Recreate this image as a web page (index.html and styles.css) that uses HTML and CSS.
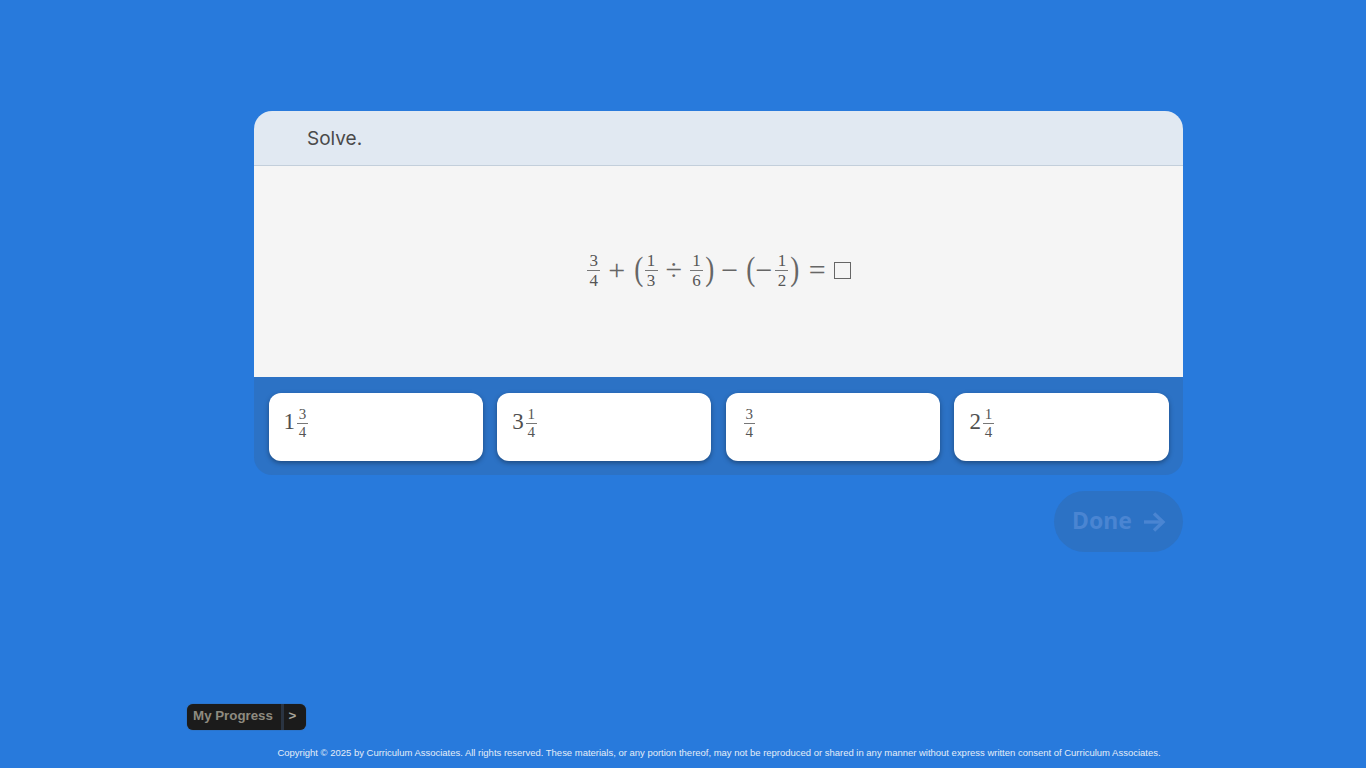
FILE: index.html
```html
<!DOCTYPE html>
<html lang="en">
<head>
  <meta charset="UTF-8">
  <title>Solve</title>
  <link rel="stylesheet" href="styles.css">
</head>
<body>
  <div id="page">
    <main id="lesson">
      <section class="question-card">
        <div class="question-header">Solve.</div>
        <div class="question-body">
          <div class="math">
            <span class="frac"><span class="num">3</span><span class="den">4</span></span>
            <span class="op">+</span>
            <span class="paren">(</span>
            <span class="frac"><span class="num">1</span><span class="den">3</span></span>
            <span class="op">÷</span>
            <span class="frac"><span class="num">1</span><span class="den">6</span></span>
            <span class="paren close">)</span>
            <span class="op minus">−</span>
            <span class="paren">(</span>
            <span class="op tight">−</span>
            <span class="frac"><span class="num">1</span><span class="den">2</span></span>
            <span class="paren close">)</span>
            <span class="op">=</span>
            <span class="blank"></span>
          </div>
        </div>
        <div class="answers">
          <button class="answer"><span class="whole">1</span><span class="frac small"><span class="num">3</span><span class="den">4</span></span></button>
          <button class="answer"><span class="whole">3</span><span class="frac small"><span class="num">1</span><span class="den">4</span></span></button>
          <button class="answer"><span class="frac small"><span class="num">3</span><span class="den">4</span></span></button>
          <button class="answer"><span class="whole">2</span><span class="frac small"><span class="num">1</span><span class="den">4</span></span></button>
        </div>
      </section>
      <div class="done-row">
        <button class="done-button" disabled>
          <span class="done-label">Done</span>
          <svg width="24" height="22" viewBox="0 0 24 22" fill="none" stroke="currentColor" stroke-width="3.4">
            <path d="M2 11H21"/>
            <path d="M12 2.5L21 11L12 19.5"/>
          </svg>
        </button>
      </div>
    </main>

    <footer id="footer">
      <div class="progress-tab">
        <span class="progress-label">My Progress</span>
        <span class="progress-arrow">&gt;</span>
      </div>
      <p class="copyright">Copyright © 2025 by Curriculum Associates. All rights reserved. These materials, or any portion thereof, may not be reproduced or shared in any manner without express written consent of Curriculum Associates.</p>
    </footer>
  </div>
</body>
</html>
```

FILE: styles.css
```css
html, body {
  margin: 0;
  height: 100%;
}

body {
  background: #287adc;
  font-family: 'Liberation Sans', Arial, sans-serif;
  overflow: hidden;
}

#page {
  height: 768px;
  display: flex;
  flex-direction: column;
}

#lesson {
  width: 929px;
  margin: 111px 0 0 254px;
}

.question-card {
  border-radius: 18px;
  overflow: hidden;
}

.question-header {
  height: 54px;
  padding-left: 53px;
  background: #e1e9f2;
  border-bottom: 1px solid #c3cfdb;
  color: #4a4a4a;
  font-family: Inter, 'Open Sans', sans-serif;
  font-size: 19px;
  font-weight: 400;
  line-height: 55px;
}

.question-body {
  height: 211px;
  background: #f5f5f5;
  display: flex;
  justify-content: center;
  align-items: center;
}

.math {
  display: flex;
  align-items: center;
  color: #666;
  font-family: 'Liberation Serif', 'Times New Roman', serif;
  font-size: 30px;
  margin-top: -3px;
  margin-left: 1px;
}

.frac {
  display: inline-flex;
  flex-direction: column;
  align-items: center;
  min-width: 13px;
  font-size: 17px;
  line-height: 19px;
  color: #555;
}

.frac .num {
  align-self: stretch;
  text-align: center;
  border-bottom: 1px solid #777;
  padding: 0 1px;
}

.op {
  margin: 0 8px;
  line-height: 30px;
}

.op.minus {
  margin: 0 7px 0 6px;
}

.op.tight {
  margin: 0 3px 0 -1px;
}

.paren {
  font-size: 34px;
  line-height: 36px;
  transform: scaleX(0.8);
  margin-top: -3px;
}

.paren.close {
  margin-left: 1px;
}

.blank {
  width: 15px;
  height: 15px;
  border: 1px solid #666;
}

.answers {
  display: grid;
  grid-template-columns: repeat(4, 1fr);
  gap: 14.5px;
  padding: 16px 14.5px 14px;
  background: #2c72c5;
}

.answer {
  height: 68px;
  padding: 13px 15px 0;
  display: flex;
  align-items: flex-start;
  gap: 2px;
  background: #fff;
  border: none;
  border-radius: 12px;
  box-shadow: 0 2px 5px rgba(0, 0, 0, 0.35);
  color: #4f4f4f;
  font-family: 'Liberation Serif', 'Times New Roman', serif;
}

.whole {
  font-size: 23px;
  line-height: 32px;
}

.frac.small {
  font-size: 15px;
  line-height: 16.5px;
  min-width: 11px;
}

.frac.small:first-child {
  margin-left: 3px;
}

.done-row {
  display: flex;
  justify-content: flex-end;
  margin-top: 16px;
}

.done-button {
  width: 129px;
  height: 61px;
  padding: 0 0 0 1px;
  display: flex;
  align-items: center;
  justify-content: center;
  gap: 10px;
  background: #2c72c5;
  border: none;
  border-radius: 31px;
  color: #4a85d2;
  font-family: 'Noto Sans', sans-serif;
  font-size: 23px;
  font-weight: 700;
}

.done-label {
  margin-top: -3px;
}

#footer {
  margin-top: auto;
}

.progress-tab {
  width: 119px;
  height: 26px;
  margin-left: 187px;
  display: flex;
  background: #1b1b1b;
  border-radius: 6px;
  box-shadow: 0 0 1px #444;
  color: #8e8b80;
  font-size: 13.3px;
  font-weight: 700;
  line-height: 24px;
}

.progress-label {
  width: 97px;
  padding-right: 2px;
  text-align: center;
  border-right: 3px solid #2a3442;
  box-sizing: border-box;
}

.progress-arrow {
  flex: 1;
  text-align: center;
  color: #a9a69b;
  padding-right: 5px;
}

.copyright {
  margin: 17px 0 9px;
  padding-left: 72px;
  text-align: center;
  color: #e3edf8;
  font-size: 9.47px;
  line-height: 12px;
}
```
